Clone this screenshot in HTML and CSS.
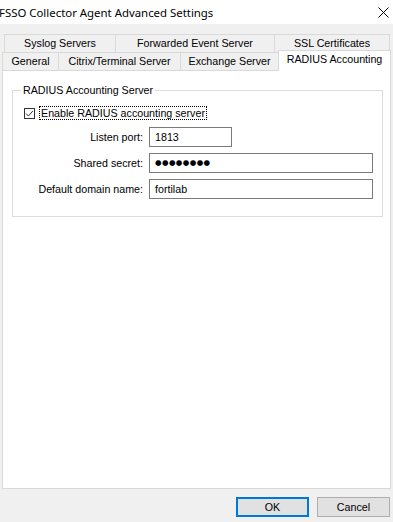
FILE: index.html
```html
<!DOCTYPE html>
<html>
<head>
<meta charset="utf-8">
<link rel="stylesheet" href="styles.css">
</head>
<body>
<div class="window">
  <div class="titlebar">
    <span class="title">FSSO Collector Agent Advanced Settings</span>
    <svg class="close" width="11" height="11" viewBox="0 0 11 11"><path d="M0.5 0.5 L10.5 10.5 M10.5 0.5 L0.5 10.5" stroke="#000" stroke-width="1" fill="none"/></svg>
  </div>
  <div class="body">
    <div class="tabrow row1">
      <div class="tab w-syslog">Syslog Servers</div>
      <div class="tab w-fwd">Forwarded Event Server</div>
      <div class="tab w-ssl">SSL Certificates</div>
    </div>
    <div class="tabrow row2">
      <div class="tab w-general">General</div>
      <div class="tab w-citrix">Citrix/Terminal Server</div>
      <div class="tab w-exch">Exchange Server</div>
      <div class="tab active w-radius">RADIUS Accounting</div>
    </div>
    <div class="panel">
      <fieldset class="group">
        <legend>RADIUS Accounting Server</legend>
        <div class="checkrow">
          <svg class="checkbox" width="11" height="11" viewBox="0 0 11 11"><rect x="0.5" y="0.5" width="10" height="10" fill="#fff" stroke="#333"/><path d="M2 5.5 L4.4 8 L9 2.8" stroke="#333" stroke-width="1" fill="none"/></svg>
          <span class="focus">Enable RADIUS accounting server</span>
        </div>
        <div class="form">
          <div class="label">Listen port:</div>
          <div class="field short">1813</div>
          <div class="label">Shared secret:</div>
          <div class="field dots">●●●●●●●●</div>
          <div class="label">Default domain name:</div>
          <div class="field">fortilab</div>
        </div>
      </fieldset>
    </div>
    <div class="buttons">
      <div class="btn default">OK</div>
      <div class="btn">Cancel</div>
    </div>
  </div>
</div>
</body>
</html>
```
FILE: styles.css
```css
html, body {
  margin: 0;
  padding: 0;
}
body {
  width: 393px;
  height: 522px;
  overflow: hidden;
  background: #f0f0f0;
  font-family: "Liberation Sans", Arial, sans-serif;
  font-size: 10.7px;
  color: #000;
}
.window {
  display: flex;
  flex-direction: column;
  height: 522px;
}
.titlebar {
  height: 24px;
  background: #fff;
  display: flex;
  align-items: center;
  justify-content: space-between;
  padding: 0 4px 0 0;
  box-sizing: border-box;
}
.title {
  font-family: "Noto Sans", "Open Sans", sans-serif;
  font-size: 11.4px;
  margin-left: -1px;
  white-space: nowrap;
}
.body {
  padding: 10px 2px 0 2px;
  display: flex;
  flex-direction: column;
}
.tabrow {
  display: flex;
  height: 18px;
}
.row1 {
  margin-left: 2px;
}
.tab {
  box-sizing: border-box;
  height: 19px;
  border: 1px solid #d9d9d9;
  border-bottom: none;
  background: #f0f0f0;
  text-align: center;
  line-height: 17px;
  margin-right: -1px;
  white-space: nowrap;
}
.w-syslog { width: 112px; }
.w-fwd { width: 160px; }
.w-ssl { width: 116px; }
.w-general { width: 57px; }
.w-citrix { width: 123px; }
.w-exch { width: 99px; }
.w-radius { width: 113px; }
.tab.active {
  position: relative;
  z-index: 2;
  background: #fff;
  height: 21px;
  margin-top: -2px;
  line-height: 17px;
}
.panel {
  box-sizing: border-box;
  height: 419px;
  background: #fff;
  border: 1px solid #d9d9d9;
  padding: 12px 7px 0 9px;
  position: relative;
  z-index: 1;
}
.group {
  margin: 0;
  padding: 0 0 17px 0;
  border: 1px solid #dcdcdc;
  min-width: 0;
}
.group legend {
  padding: 0 2px;
  margin-left: 8px;
  line-height: 14px;
}
.checkrow {
  display: flex;
  align-items: center;
  margin: 9px 0 0 11px;
  height: 14px;
}
.checkbox {
  display: block;
  flex: none;
}
.focus {
  margin-left: 4px;
  border: 1px dotted #000;
  padding: 0 1px;
  line-height: 12px;
}
.form {
  display: grid;
  grid-template-columns: 130px 1fr;
  column-gap: 6px;
  row-gap: 6px;
  grid-auto-rows: 20px;
  margin: 7px 9px 0 0;
}
.label {
  text-align: right;
  line-height: 20px;
  white-space: nowrap;
}
.field {
  box-sizing: border-box;
  border: 1px solid #7a7a7a;
  background: #fff;
  padding-left: 5px;
  line-height: 18px;
}
.field.short {
  width: 83px;
}
.field.dots {
  font-family: "DejaVu Sans", sans-serif;
  font-size: 7.5px;
  letter-spacing: 0.4px;
  line-height: 18px;
}
.buttons {
  display: flex;
  justify-content: flex-end;
  gap: 8px;
  margin-top: 8px;
  padding-right: 1px;
}
.btn {
  box-sizing: border-box;
  width: 73px;
  height: 20px;
  background: #e1e1e1;
  border: 1px solid #adadad;
  text-align: center;
  line-height: 18px;
}
.btn.default {
  border: 2px solid #0078d7;
  line-height: 16px;
}
```
